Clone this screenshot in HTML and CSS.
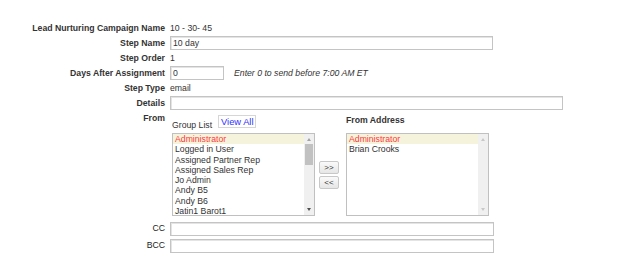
FILE: index.html
```html
<!DOCTYPE html>
<html lang="en">
<head>
  <meta charset="UTF-8">
  <title>Lead Nurturing Step</title>
  <link rel="stylesheet" href="styles.css">
</head>
<body>
  <div class="step-form">
    <div class="label">Lead Nurturing Campaign Name</div>
    <div class="value">10 - 30- 45</div>

    <div class="label">Step Name</div>
    <div class="value"><input type="text" class="field field-name" value="10 day"></div>

    <div class="label">Step Order</div>
    <div class="value">1</div>

    <div class="label">Days After Assignment</div>
    <div class="value">
      <input type="text" class="field field-days" value="0">
      <span class="hint">Enter 0 to send before 7:00 AM ET</span>
    </div>

    <div class="label">Step Type</div>
    <div class="value">email</div>

    <div class="label">Details</div>
    <div class="value"><input type="text" class="field field-details"></div>

    <div class="label label-top">From</div>
    <div class="from">
      <div class="from-col">
        <div class="from-head">
          <span class="group-title">Group List</span>
          <button class="view-all">View All</button>
        </div>
        <div class="listbox listbox-left">
          <div class="options">
            <div class="option selected">Administrator</div>
            <div class="option">Logged in User</div>
            <div class="option">Assigned Partner Rep</div>
            <div class="option">Assigned Sales Rep</div>
            <div class="option">Jo Admin</div>
            <div class="option">Andy B5</div>
            <div class="option">Andy B6</div>
            <div class="option">Jatin1 Barot1</div>
          </div>
          <div class="scrollbar">
            <span class="arrow up"></span>
            <span class="thumb"></span>
            <span class="arrow down"></span>
          </div>
        </div>
      </div>
      <div class="move-buttons">
        <button class="move">&gt;&gt;</button>
        <button class="move">&lt;&lt;</button>
      </div>
      <div class="from-col">
        <div class="from-head"><span class="address-title">From Address</span></div>
        <div class="listbox listbox-right">
          <div class="options">
            <div class="option selected">Administrator</div>
            <div class="option">Brian Crooks</div>
          </div>
          <div class="scrollbar disabled">
            <span class="arrow up"></span>
            <span class="arrow down"></span>
          </div>
        </div>
      </div>
    </div>

    <div class="label label-plain">CC</div>
    <div class="value"><input type="text" class="field field-cc"></div>

    <div class="label label-plain">BCC</div>
    <div class="value"><input type="text" class="field field-cc"></div>
  </div>
</body>
</html>
```

FILE: styles.css
```css
body {
  margin: 0;
  background-color: #fff;
  font-family: "Liberation Sans", Arial, sans-serif;
  font-size: 8.7px;
  color: #333;
}
.step-form {
  display: grid;
  grid-template-columns: 165px 1fr;
  grid-auto-rows: minmax(14px, auto);
  column-gap: 5px;
  row-gap: 1px;
  padding-top: 21px;
}
.label {
  text-align: right;
  font-weight: bold;
  display: flex;
  align-items: center;
  justify-content: flex-end;
}
.label-top {
  align-items: flex-start;
  padding-top: 2px;
}
.label-plain {
  font-weight: normal;
  color: #222;
}
.value {
  display: flex;
  align-items: center;
}
.field {
  box-sizing: border-box;
  height: 14px;
  margin: 0;
  padding: 0 2px;
  border: 1px solid #c4c4c4;
  box-shadow: inset 1px 1px 0 #e4e4e4;
  font-family: inherit;
  font-size: 8.7px;
  color: #333;
  outline: none;
}
.field-name { width: 323px; }
.field-days { width: 54px; }
.field-details { width: 393px; }
.field-cc { width: 324px; margin-top: 2px; }
.hint {
  margin-left: 10px;
  font-style: italic;
}
.from {
  display: flex;
  align-items: flex-start;
  padding-left: 2px;
  padding-bottom: 3px;
}
.from-col {
  display: flex;
  flex-direction: column;
}
.from-head {
  height: 22px;
  display: flex;
  align-items: flex-end;
  padding-bottom: 3px;
  box-sizing: border-box;
}
.view-all {
  align-self: flex-start;
  margin: 4px 0 0 6px;
  height: 13px;
  padding: 0 2px;
  border: 1px solid #d6d6d6;
  background: #fff;
  color: #3030ff;
  font-family: inherit;
  font-size: 9.3px;
  line-height: 10px;
}
.address-title {
  font-weight: bold;
  padding-bottom: 5px;
}
.listbox {
  display: flex;
  box-sizing: border-box;
  height: 83px;
  border: 1px solid #c0c0c0;
  background: #fff;
  overflow: hidden;
}
.listbox-left { width: 143px; }
.listbox-right { width: 143px; }
.options {
  flex: 1;
}
.option {
  height: 10.3px;
  line-height: 10.3px;
  padding-left: 2px;
  white-space: nowrap;
}
.option.selected {
  background: #f5f3dc;
  color: #ff3a3a;
}
.scrollbar {
  width: 10px;
  background: #f0f0f0;
  display: flex;
  flex-direction: column;
  align-items: center;
}
.arrow {
  width: 0;
  height: 0;
  border-left: 2.5px solid transparent;
  border-right: 2.5px solid transparent;
}
.arrow.up {
  margin: 4px 0 3px;
  border-bottom: 3px solid #a3a3a3;
}
.arrow.down {
  margin: auto 0 4px;
  border-top: 3px solid #505050;
}
.scrollbar.disabled .arrow.up { border-bottom-color: #c8c8c8; }
.scrollbar.disabled .arrow.down { border-top-color: #c8c8c8; }
.thumb {
  width: 8px;
  height: 21px;
  background: #c1c1c1;
}
.move-buttons {
  display: flex;
  flex-direction: column;
  gap: 2px;
  margin: 50px 7px 0 4px;
}
.move {
  box-sizing: border-box;
  width: 20px;
  height: 13px;
  padding: 0;
  border: 1px solid #c8c8c8;
  border-radius: 2px;
  background: linear-gradient(#fafafa, #e6e6e6);
  color: #333;
  font-family: inherit;
  font-size: 8px;
  line-height: 10px;
}
```
